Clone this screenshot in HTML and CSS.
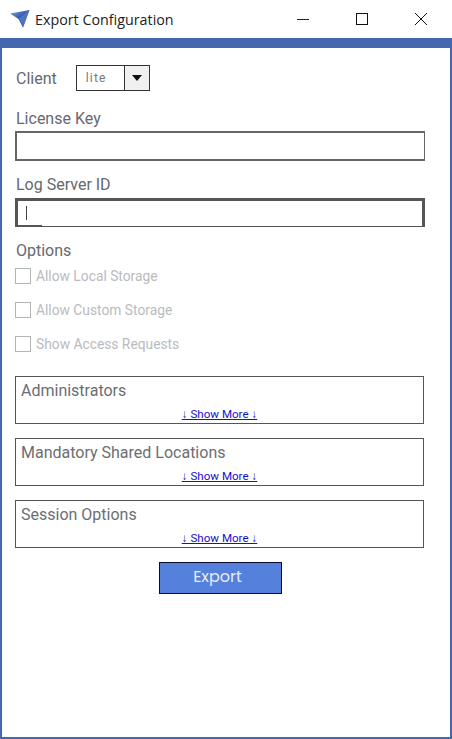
FILE: index.html
```html
<!DOCTYPE html>
<html lang="en">
<head>
  <meta charset="UTF-8">
  <title>Export Configuration</title>
  <link rel="stylesheet" href="styles.css">
</head>
<body>
  <div class="titlebar">
    <svg class="app-icon" width="20" height="18" viewBox="0 0 20 18">
      <defs>
        <linearGradient id="wing" x1="0" y1="0" x2="0.7" y2="1">
          <stop offset="0" stop-color="#8fa6d6"/>
          <stop offset="0.55" stop-color="#2a58b4"/>
          <stop offset="1" stop-color="#123a8c"/>
        </linearGradient>
      </defs>
      <path d="M0 3.5 L19.5 0 L13 17.5 L8.5 9 Z" fill="url(#wing)"/>
      <path d="M9 8.5 L19.5 0 L17 6.5 L13 17.5 Z" fill="#5f7fc4" opacity="0.75"/>
    </svg>
    <span class="title">Export Configuration</span>
    <div class="window-buttons">
      <svg width="14" height="14" viewBox="0 0 14 14"><path d="M1 7.5 H13" stroke="#222" fill="none"/></svg>
      <svg width="14" height="14" viewBox="0 0 14 14"><rect x="1.5" y="1.5" width="11" height="11" stroke="#111" fill="none"/></svg>
      <svg width="14" height="14" viewBox="0 0 14 14"><path d="M1 1 L13 13 M13 1 L1 13" stroke="#111" fill="none"/></svg>
    </div>
  </div>

  <div class="window">
    <div class="client-row">
      <label>Client</label>
      <div class="select">
        <span class="select-value">lite</span>
        <span class="select-arrow"></span>
      </div>
    </div>

    <label class="field-label">License Key</label>
    <div class="text-input"></div>

    <label class="field-label server-label">Log Server ID</label>
    <div class="text-input focused"><span class="caret"></span><span class="underline"></span></div>

    <label class="field-label options-label">Options</label>
    <div class="check"><span class="box"></span>Allow Local Storage</div>
    <div class="check"><span class="box"></span>Allow Custom Storage</div>
    <div class="check"><span class="box"></span>Show Access Requests</div>

    <div class="panel first">
      <div class="panel-title">Administrators</div>
      <a class="more" href="#">↓ Show More ↓</a>
    </div>
    <div class="panel">
      <div class="panel-title">Mandatory Shared Locations</div>
      <a class="more" href="#">↓ Show More ↓</a>
    </div>
    <div class="panel">
      <div class="panel-title">Session Options</div>
      <a class="more" href="#">↓ Show More ↓</a>
    </div>

    <button class="export">Export</button>
  </div>
</body>
</html>
```

FILE: styles.css
```css
html, body { margin: 0; height: 100%; }
body { font-family: Roboto, sans-serif; background: #fff; overflow: hidden; display: flex; flex-direction: column; }

.titlebar { height: 38px; display: flex; align-items: center; flex: none; }
.app-icon { margin-left: 10px; margin-top: -1px; }
.title { font-family: "Open Sans", sans-serif; font-size: 14.3px; color: #222; margin-left: 5px; }
.window-buttons { margin-left: auto; display: flex; gap: 45px; padding-right: 24px; }

.window { flex: 1; box-sizing: border-box; border: 2px solid #4368b0; border-top: 10px solid #4368b0; padding: 17px 0 0 13px; color: #66696e; }
label { font-size: 16px; display: block; padding-left: 1px; }

.client-row { display: flex; align-items: center; gap: 19px; height: 26px; }
.select { width: 74px; height: 26px; box-sizing: border-box; border: 1px solid #333; display: flex; }
.select-value { flex: 1; font-size: 12px; letter-spacing: 1.2px; padding-left: 9px; line-height: 24px; color: #777; }
.select-arrow { width: 24px; background: #f0f0f0; border-left: 1px solid #333; position: relative; }
.select-arrow::after { content: ""; position: absolute; left: 7px; top: 9px; border-left: 5px solid transparent; border-right: 5px solid transparent; border-top: 6px solid #111; }

.field-label { line-height: 20px; margin-top: 18px; margin-bottom: 2px; }
.server-label { margin-top: 14px; margin-bottom: 3px; }
.text-input { width: 410px; height: 30px; box-sizing: border-box; border: 1px solid #666; border-width: 2px 1px 2px 2px; position: relative; }
.text-input.focused { height: 29px; border: 3px solid #555; border-bottom-width: 1px; }
.caret { position: absolute; left: 8px; top: 5px; width: 1px; height: 14px; background: #444; }
.underline { position: absolute; left: -3px; bottom: -1px; width: 27px; height: 2px; background: #555; }

.options-label { margin-top: 14px; margin-bottom: 7px; }
.check { display: flex; align-items: center; height: 16px; margin-bottom: 18px; font-size: 13.8px; color: #b9bbc0; }
.box { width: 14px; height: 14px; border: 1px solid #b4b4b4; margin-right: 5px; flex: none; }

.panel { width: 409px; height: 48px; box-sizing: border-box; border: 1px solid #555; margin-top: 14px; position: relative; padding: 4px 5px; }
.panel.first { margin-top: 24px; }
.panel-title { font-size: 16px; line-height: 19px; color: #6b6e73; }
.more { position: absolute; left: 0; right: 0; top: 30px; text-align: center; font-size: 11.6px; line-height: 14px; color: #1a0dcc; }

.export { display: block; margin: 14px 0 0 144px; width: 123px; height: 32px; box-sizing: border-box; background: #5580dc; border: 1px solid #0a0a2a; color: #e4ecfb; font-family: Poppins, "Open Sans", sans-serif; font-size: 16px; padding: 0 6px 4px 0; }
```
